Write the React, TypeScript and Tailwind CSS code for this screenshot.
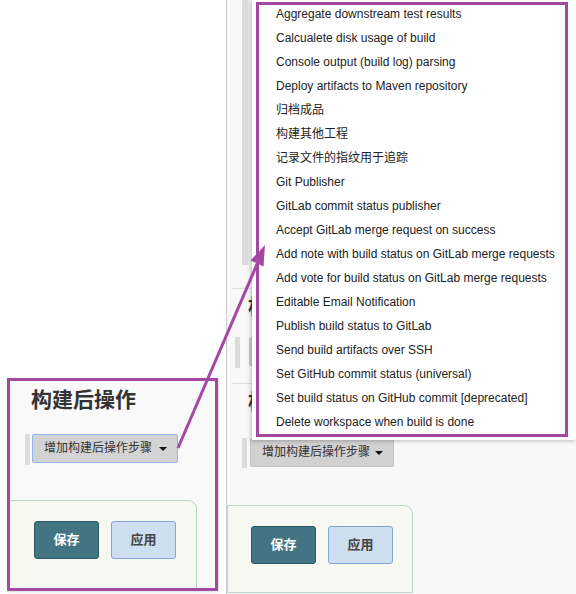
import React from "react";

const items = [
  "Aggregate downstream test results",
  "Calcualete disk usage of build",
  "Console output (build log) parsing",
  "Deploy artifacts to Maven repository",
  "归档成品",
  "构建其他工程",
  "记录文件的指纹用于追踪",
  "Git Publisher",
  "GitLab commit status publisher",
  "Accept GitLab merge request on success",
  "Add note with build status on GitLab merge requests",
  "Add vote for build status on GitLab merge requests",
  "Editable Email Notification",
  "Publish build status to GitLab",
  "Send build artifacts over SSH",
  "Set GitHub commit status (universal)",
  "Set build status on GitHub commit [deprecated]",
  "Delete workspace when build is done",
];

const font = { fontFamily: '"Liberation Sans", "Noto Sans CJK SC", Arial, sans-serif' };

function Caret() {
  return <span className="inline-block w-0 h-0 border-l-[4px] border-r-[4px] border-t-[4px] border-l-transparent border-r-transparent border-t-[#111]" />;
}

function AddButton({ focused, width, label = true }: { focused?: boolean; width: string; label?: boolean }) {
  return (
    <div
      className={
        "h-[29px] flex items-center justify-between pl-[11px] pr-[10px] rounded-[2px] text-[12px] text-[#333] " +
        width +
        (focused ? " bg-[#d3d3d3] border border-[#8fb5ec]" : " bg-[#d1d1d1] border border-[#c4c4c4]")
      }
    >
      {label ? <span className="leading-[27px]">增加构建后操作步骤</span> : <span />}
      {label ? <Caret /> : <span />}
    </div>
  );
}

function SaveButtons() {
  return (
    <div className="flex gap-[12px]">
      <div className="w-[65px] h-[38px] rounded-[3px] bg-[#427483] border border-[#2e5663] flex items-center justify-center text-white text-[13px] font-bold">
        保存
      </div>
      <div className="w-[65px] h-[38px] rounded-[3px] bg-[#cddff1] border border-[#7fa6d7] flex items-center justify-center text-[#444] text-[13px] font-bold">
        应用
      </div>
    </div>
  );
}

function HiddenHeading() {
  return (
    <div className="mt-[4px] ml-[21px] w-[4px] h-[28px] overflow-hidden text-[21px] font-bold leading-[28px] text-[#333]">
      构
    </div>
  );
}

export default function App() {
  return (
    <div className="relative w-[576px] h-[594px] overflow-hidden bg-white flex" style={font}>
      {/* Left screenshot crop */}
      <div className="w-[226px] shrink-0 h-full bg-white pt-[378px] pl-[7px]">
        <div className="w-[211px] h-[213px] border-[3px] border-[#a349a4] bg-[#f9f9f9] flex flex-col shadow-[1px_1px_2px_rgba(0,0,0,0.15)]">
          <div className="pl-[21px] pt-[5px] h-[33px] text-[21px] font-bold leading-[28px] text-[#333]">构建后操作</div>
          <div className="mt-[20px] ml-[15px] flex items-start gap-[2px]">
            <div className="w-[5px] h-[31px] bg-[#dcdcdc]" />
            <AddButton focused width="w-[146px]" />
          </div>
          <div className="mt-[35px] w-[187px] flex-1 bg-[#f7f8f1] border-t border-r border-[#b5d9c6] rounded-tr-[9px] pl-[24px] pt-[20px]">
            <SaveButtons />
          </div>
        </div>
      </div>

      {/* Right screenshot */}
      <div className="flex-1 h-full bg-[#f8f8f8] border-l border-[#cccccc] flex flex-col">
        <div className="h-[265px] ml-[15px] flex">
          <div className="w-[6px] h-full bg-[#dadada]" />
          <div className="w-[2px] h-full bg-[#e8e8e8]" />
        </div>
        <div className="mt-[23px] ml-[5px] h-[1px] bg-[#dddddd]" />
        <HiddenHeading />
        <div className="mt-[16px] ml-[8px] flex items-start gap-[9px]">
          <div className="w-[5px] h-[31px] bg-[#dcdcdc]" />
          <AddButton width="w-[150px]" label={false} />
        </div>
        <div className="mt-[15px] ml-[5px] h-[1px] bg-[#dddddd]" />
        <HiddenHeading />
        <div className="mt-[22px] ml-[15px] flex items-start gap-[3px]">
          <div className="w-[5px] h-[30px] bg-[#dcdcdc]" />
          <AddButton width="w-[144px]" />
        </div>
        <div className="mt-[37px] w-[186px] h-[88px] bg-[#f7f8f1] border border-[#b5d9c6] rounded-tr-[9px] pl-[23px] pt-[20px]">
          <SaveButtons />
        </div>
      </div>

      {/* Dropdown menu overlay */}
      <div className="absolute left-[252px] top-0 w-[324px] h-[440px] bg-white shadow-[-1px_1px_4px_rgba(0,0,0,0.25)] pt-[2px]">
        {items.map((t) => (
          <div key={t} className="h-[24px] leading-[24px] pl-[24px] text-[12px] text-[#222] whitespace-nowrap">
            {t}
          </div>
        ))}
      </div>

      {/* Annotation: purple box around menu */}
      <div className="absolute left-[256px] top-[2px] w-[312px] h-[435px] border-[3px] border-[#a349a4] pointer-events-none" />

      {/* Annotation: arrow */}
      <svg className="absolute left-0 top-0 pointer-events-none" width="576" height="594" viewBox="0 0 576 594">
        <line x1="178" y1="448" x2="258" y2="262" stroke="#a349a4" strokeWidth="3" />
        <polygon points="265,245 250.5,260.5 263.5,266.5" fill="#a349a4" />
      </svg>
    </div>
  );
}
